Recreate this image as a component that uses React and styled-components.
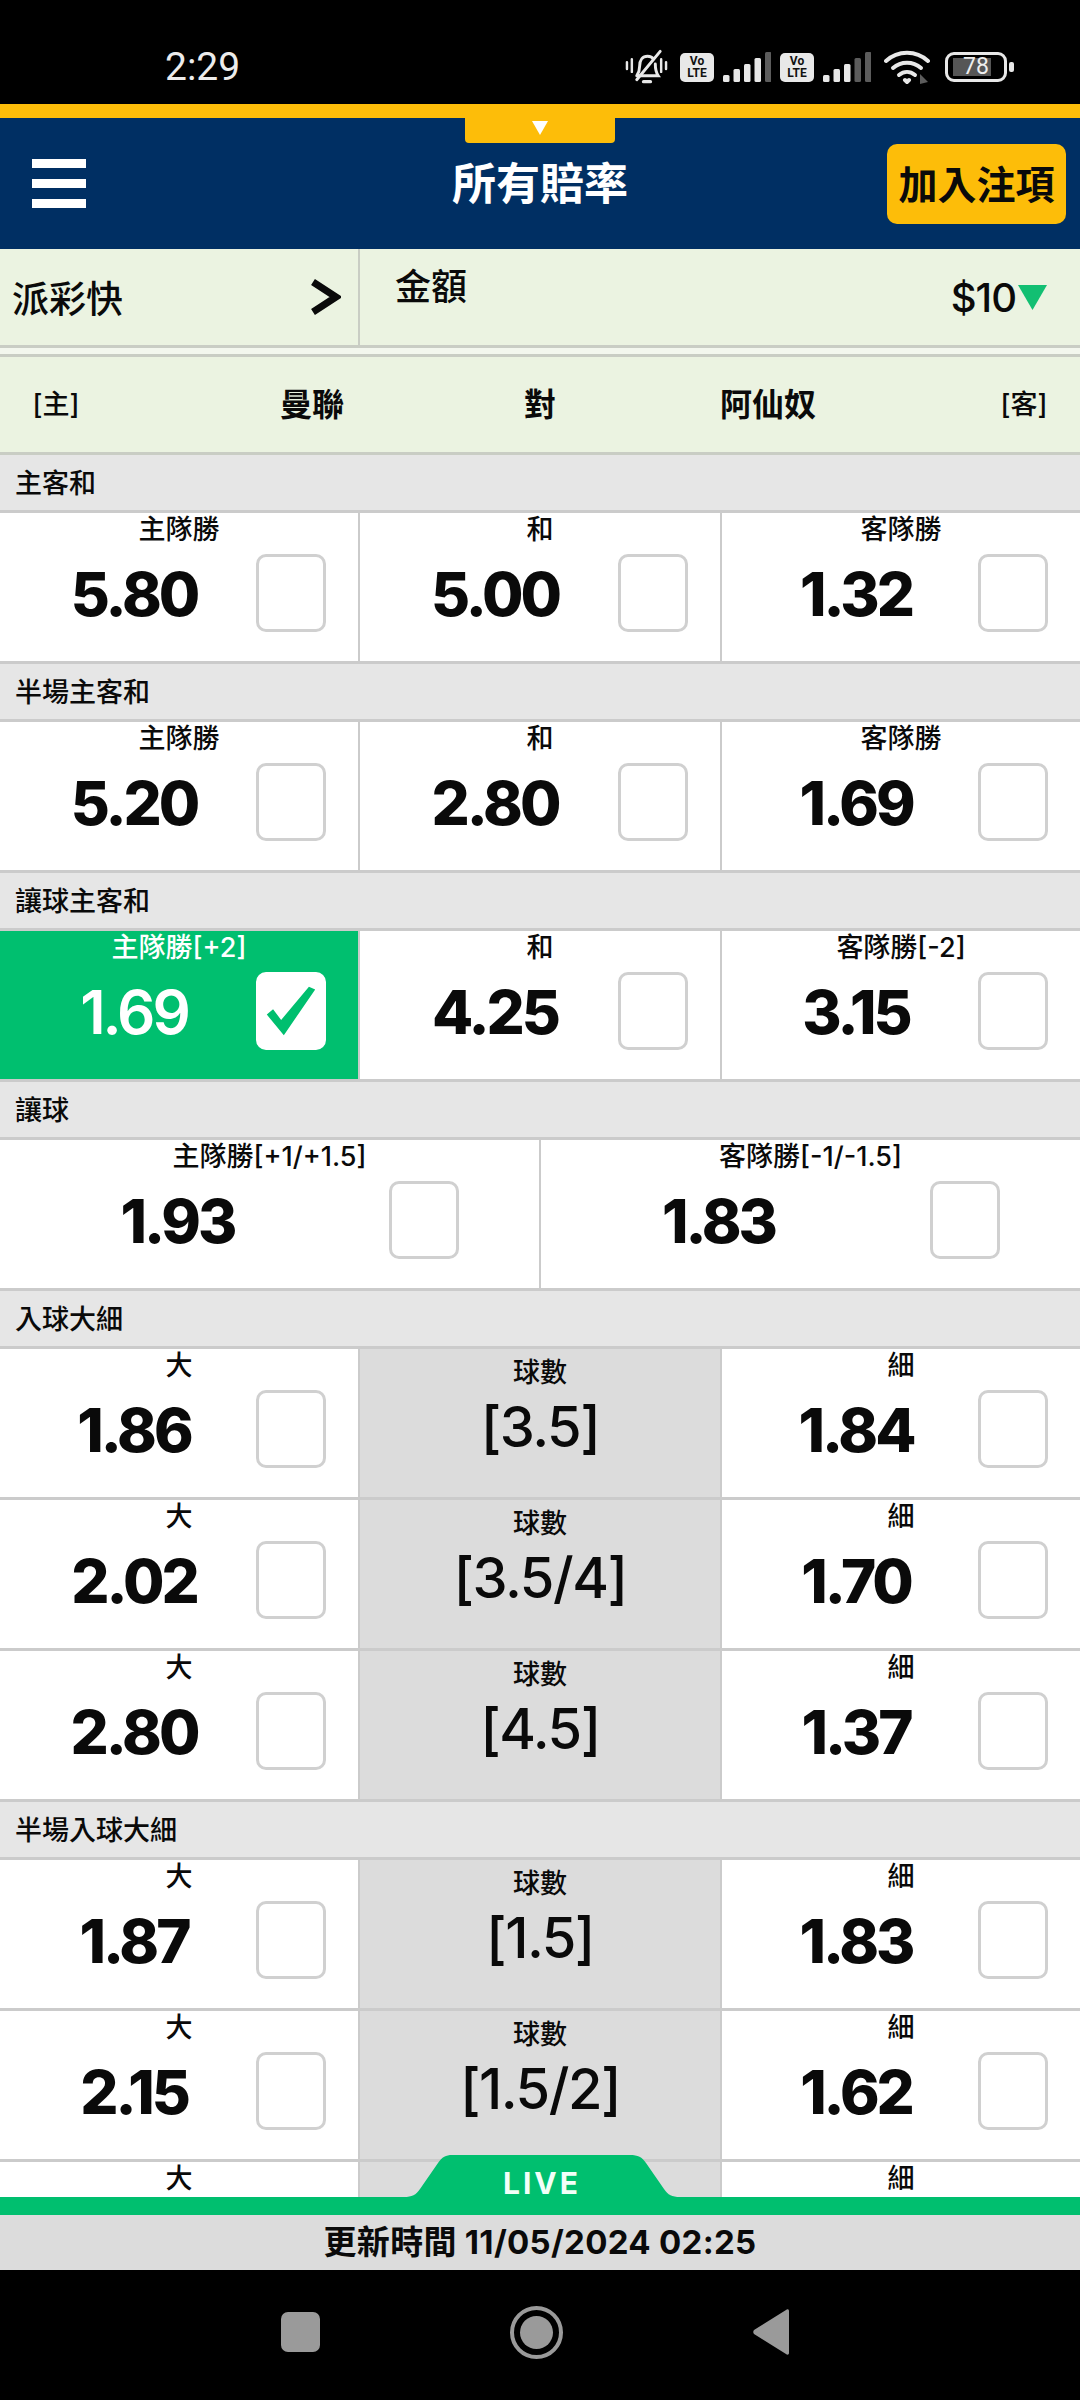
import React from 'react';
import styled, { createGlobalStyle } from 'styled-components';

const GlobalStyle = createGlobalStyle`
  html, body { margin: 0; padding: 0; background: #000; }
  * { box-sizing: border-box; }
  body { font-family: Inter, "Noto Sans CJK TC", sans-serif; color: #0a0a0a; }
`;

const Page = styled.div`
  width: 1080px;
  height: 2400px;
  display: flex;
  flex-direction: column;
  overflow: hidden;
`;

/* status bar */
const StatusBar = styled.div`
  height: 104px;
  flex: none;
  background: #000;
  display: flex;
  align-items: center;
  justify-content: space-between;
  padding: 44px 73px 14px 165px;
`;
const Clock = styled.div`
  color: #ececec;
  font-family: Roboto, sans-serif;
  font-size: 39px;
  line-height: 44px;
`;
const StatusIcons = styled.div`
  display: flex;
  align-items: center;
  gap: 9px;
`;
const VoLte = styled.div`
  width: 34px;
  height: 29px;
  border-radius: 5px;
  background: #e8e8e8;
  color: #111;
  font-family: Roboto, sans-serif;
  font-size: 12px;
  line-height: 12px;
  font-weight: 700;
  text-align: center;
  padding-top: 2px;
`;
const BellSlot = styled.div`
  display: flex;
  margin-right: 3px;
`;
const WifiSlot = styled.div`
  display: flex;
  margin-left: 4px;
`;
const Battery = styled.div`
  position: relative;
  width: 62px;
  height: 30px;
  margin-left: 6px;
  border: 3px solid #e8e8e8;
  border-radius: 9px;
  padding: 3px 5px;
  &::after {
    content: '';
    position: absolute;
    right: -10px;
    top: 7px;
    width: 5px;
    height: 10px;
    border-radius: 2px;
    background: #e8e8e8;
  }
`;
const BatteryFill = styled.div`
  height: 100%;
  width: 38px;
  background: #565656;
  color: #eee;
  font-family: Roboto, sans-serif;
  font-size: 23px;
  line-height: 18px;
  text-align: center;
  padding-left: 8px;
  white-space: nowrap;
`;

/* navy header */
const TopLine = styled.div`
  height: 14px;
  flex: none;
  background: #fdbd09;
`;
const Header = styled.header`
  position: relative;
  height: 131px;
  flex: none;
  background: #002f63;
  display: grid;
  grid-template-columns: 1fr auto 1fr;
  align-items: center;
  padding: 0 14px;
`;
const PullTab = styled.div`
  position: absolute;
  left: 465px;
  top: 0;
  width: 150px;
  height: 25px;
  background: #fdbd09;
  border-radius: 0 0 4px 4px;
  display: flex;
  justify-content: center;
  padding-top: 3px;
`;
const Burger = styled.div`
  width: 54px;
  margin-left: 18px;
  display: flex;
  flex-direction: column;
  gap: 11px;
`;
const BurgerLine = styled.span`
  height: 9px;
  background: #fff;
`;
const Title = styled.h1`
  margin: 0;
  color: #fff;
  font-size: 44px;
  line-height: 50px;
  font-weight: 700;
`;
const AddButton = styled.button`
  justify-self: end;
  width: 179px;
  height: 80px;
  border: 0;
  border-radius: 10px;
  background: #fdbd09;
  color: #0a0a0a;
  font-family: inherit;
  font-size: 39px;
  font-weight: 700;
  padding: 0 0 3px;
  white-space: nowrap;
`;

/* bet type and amount */
const QuickRow = styled.div`
  height: 99px;
  flex: none;
  display: grid;
  grid-template-columns: 360px 1fr;
  background: #ebf3e1;
  border-bottom: 3px solid #c9cdc4;
`;
const QuickType = styled.div`
  display: flex;
  align-items: center;
  justify-content: space-between;
  padding: 0 17px 0 12px;
  border-right: 2px solid #c9cdc4;
  font-size: 37px;
  font-weight: 500;
`;
const Amount = styled.div`
  display: flex;
  justify-content: space-between;
  padding: 17px 33px 0 35px;
`;
const AmountLabel = styled.div`
  font-size: 36px;
  line-height: 42px;
  font-weight: 500;
`;
const AmountValue = styled.div`
  display: flex;
  align-items: center;
  gap: 2px;
  height: 46px;
  margin-top: 8px;
  font-size: 40px;
  font-weight: 500;
  letter-spacing: -1px;
`;
const Gap = styled.div`
  height: 6px;
  flex: none;
  background: #f3f7ee;
`;

const Teams = styled.div`
  height: 101px;
  flex: none;
  display: grid;
  grid-template-columns: 112px 400px 56px 400px 112px;
  align-items: center;
  background: #ebf3e1;
  border-top: 3px solid #c9cdc4;
  border-bottom: 3px solid #c9cdc4;
  padding-bottom: 5px;
  text-align: center;
`;
const TeamText = styled.div`
  font-size: ${({ $small }) => ($small ? '27px' : '32px')};
  font-weight: ${({ $small }) => ($small ? 500 : 700)};
`;

/* odds list */
const List = styled.main`
  flex: 1;
  min-height: 0;
  overflow: hidden;
  background: #fff;
`;
const SectionTitle = styled.div`
  height: 58px;
  background: #e6e6e6;
  border-bottom: 3px solid #cbcbcb;
  padding-left: 15px;
  font-size: 27px;
  font-weight: 500;
  line-height: 57px;
`;
const Row = styled.div`
  height: 151px;
  display: grid;
  grid-template-columns: ${({ $cols }) => ($cols === 2 ? '541px 1fr' : '360px 362px 1fr')};
  border-bottom: 3px solid #cbcbcb;
`;
const Cell = styled.div`
  background: ${({ $on }) => ($on ? '#00bf6f' : '#fff')};
  color: ${({ $on }) => ($on ? '#fff' : '#0a0a0a')};
  border-right: 2px solid #cbcbcb;
  &:last-child { border-right: 0; }
`;
const Label = styled.div`
  height: 32px;
  line-height: 34px;
  text-align: center;
  font-size: 27px;
  font-weight: 500;
  white-space: nowrap;
`;
const CellBody = styled.div`
  display: flex;
  align-items: flex-start;
  margin-top: 9px;
  padding-right: ${({ $wide }) => ($wide ? '80px' : '32px')};
`;
const Odds = styled.div`
  flex: 1;
  text-align: center;
  font-size: 60px;
  line-height: 80px;
  font-weight: ${({ $on }) => ($on ? 600 : 800)};
  letter-spacing: -3px;
  padding: ${({ $wide }) => ($wide ? '0 34px 0 0' : '0 0 0 12px')};
`;
const Box = styled.div`
  width: 70px;
  height: 78px;
  flex: none;
  background: #fff;
  border: 3px solid #d0d0d0;
  border-radius: 10px;
  display: flex;
  align-items: center;
  justify-content: center;
  ${({ $on }) => $on && 'border-color: #fff;'}
`;
const LineCell = styled.div`
  background: #dcdcdc;
  border-right: 2px solid #cbcbcb;
  text-align: center;
  padding-top: 7px;
`;
const LineValue = styled.div`
  margin-top: 9px;
  font-size: 56px;
  line-height: 60px;
  font-weight: 500;
  letter-spacing: -1.5px;
`;

/* footer */
const Footer = styled.footer`
  position: relative;
  flex: none;
`;
const LiveTab = styled.div`
  position: absolute;
  left: 404px;
  bottom: 100%;
  width: 276px;
  height: 42px;
  display: flex;
`;
const LiveText = styled.span`
  position: absolute;
  left: 0;
  right: 0;
  bottom: -2px;
  text-align: center;
  color: #f2fff8;
  font-size: 30px;
  line-height: 32px;
  font-weight: 700;
  letter-spacing: 3px;
`;
const GreenBar = styled.div`
  height: 18px;
  background: #00bf6f;
`;
const UpdateBar = styled.div`
  height: 55px;
  background: #dcdcdc;
  text-align: center;
  font-size: 33px;
  line-height: 55px;
  font-weight: 700;
  letter-spacing: 0.3px;
`;
const NavBar = styled.nav`
  height: 130px;
  background: #000;
  display: flex;
  align-items: center;
  gap: 190px;
  padding: 0 0 6px 281px;
`;
const NavSquare = styled.div`
  width: 39px;
  height: 40px;
  border-radius: 7px;
  background: #9a9a9a;
`;

const BellIcon = () => (
  <svg width="43" height="36" viewBox="0 0 44 36" fill="none" stroke="#e8e8e8" strokeWidth="3" strokeLinecap="round">
    <path d="M12 27c2-3 3-5 3-10 0-6 3-10 8-10 3 0 5 1 6 3M31 15c0 6 1 9 3 12H14" />
    <path d="M12 31L36 2" />
    <path d="M2 13v7M7 10v13M37 10v13M42 13v7" strokeWidth="2.5" />
    <path d="M19 33h7" strokeWidth="3.5" />
  </svg>
);

const SignalIcon = ({ dim }) => (
  <svg width="48" height="30" viewBox="0 0 48 30">
    {[7, 13, 18, 24, 30].map((h, i) => (
      <rect
        key={i}
        x={i * 10.5}
        y={30 - h}
        width="6.5"
        height={h}
        rx="1.5"
        fill={i >= 5 - dim ? '#5c5c5c' : '#e8e8e8'}
      />
    ))}
  </svg>
);

const WifiIcon = () => (
  <svg width="46" height="34" viewBox="0 0 46 34" fill="none" stroke="#e8e8e8" strokeWidth="4" strokeLinecap="round">
    <path d="M2 11c12-11 30-11 42 0" />
    <path d="M9 18c8-7 20-7 28 0" />
    <path d="M15 25c5-4 11-4 16 0" />
    <path d="M21 30l2 2 2-2" strokeWidth="4" />
    <path d="M36 34V24l8 8z" fill="#5c5c5c" stroke="none" />
  </svg>
);

const Chevron = () => (
  <svg width="30" height="36" viewBox="0 0 30 36" fill="none" stroke="#0a0a0a" strokeWidth="7">
    <path d="M2 3l23 15L2 33" />
  </svg>
);

const AmountArrow = () => (
  <svg width="29" height="25" viewBox="0 0 29 25">
    <path d="M0 0h29L14.5 25z" fill="#12bf72" />
  </svg>
);

const PullArrow = () => (
  <svg width="16" height="14" viewBox="0 0 16 14">
    <path d="M0 0h16L8 14z" fill="#fff" />
  </svg>
);

const CheckMark = () => (
  <svg width="52" height="52" viewBox="0 0 58 58">
    <path d="M2 33l7-6 9 12L49 2l7 3-35 51z" fill="#00bf6f" />
  </svg>
);

const OddsCell = ({ label, odds, on, wide }) => (
  <Cell $on={on}>
    <Label>{label}</Label>
    <CellBody $wide={wide}>
      <Odds $on={on} $wide={wide}>{odds}</Odds>
      <Box $on={on}>{on && <CheckMark />}</Box>
    </CellBody>
  </Cell>
);

const GoalRow = ({ big, line, small }) => (
  <Row>
    <OddsCell label="大" odds={big} />
    <LineCell>
      {line && <Label>球數</Label>}
      <LineValue>{line}</LineValue>
    </LineCell>
    <OddsCell label="細" odds={small} />
  </Row>
);

const markets = [
  { title: '主客和', cells: [['主隊勝', '5.80'], ['和', '5.00'], ['客隊勝', '1.32']] },
  { title: '半場主客和', cells: [['主隊勝', '5.20'], ['和', '2.80'], ['客隊勝', '1.69']] },
  { title: '讓球主客和', cells: [['主隊勝[+2]', '1.69', true], ['和', '4.25'], ['客隊勝[-2]', '3.15']] },
];

const goals = [
  {
    title: '入球大細',
    rows: [['1.86', '[3.5]', '1.84'], ['2.02', '[3.5/4]', '1.70'], ['2.80', '[4.5]', '1.37']],
  },
  {
    title: '半場入球大細',
    rows: [['1.87', '[1.5]', '1.83'], ['2.15', '[1.5/2]', '1.62'], ['', '', '']],
  },
];

export default function App() {
  return (
    <Page>
      <GlobalStyle />
      <StatusBar>
        <Clock>2:29</Clock>
        <StatusIcons>
          <BellSlot><BellIcon /></BellSlot>
          <VoLte>Vo<br />LTE</VoLte>
          <SignalIcon dim={1} />
          <VoLte>Vo<br />LTE</VoLte>
          <SignalIcon dim={2} />
          <WifiSlot><WifiIcon /></WifiSlot>
          <Battery><BatteryFill>78</BatteryFill></Battery>
        </StatusIcons>
      </StatusBar>
      <TopLine />
      <Header>
        <PullTab><PullArrow /></PullTab>
        <Burger>
          <BurgerLine />
          <BurgerLine />
          <BurgerLine />
        </Burger>
        <Title>所有賠率</Title>
        <AddButton>加入注項</AddButton>
      </Header>

      <QuickRow>
        <QuickType>派彩快<Chevron /></QuickType>
        <Amount>
          <AmountLabel>金額</AmountLabel>
          <AmountValue>$10<AmountArrow /></AmountValue>
        </Amount>
      </QuickRow>
      <Gap />
      <Teams>
        <TeamText $small>[主]</TeamText>
        <TeamText>曼聯</TeamText>
        <TeamText>對</TeamText>
        <TeamText>阿仙奴</TeamText>
        <TeamText $small>[客]</TeamText>
      </Teams>

      <List>
        {markets.map((m) => (
          <div key={m.title}>
            <SectionTitle>{m.title}</SectionTitle>
            <Row>
              {m.cells.map(([label, odds, on]) => (
                <OddsCell key={label} label={label} odds={odds} on={on} />
              ))}
            </Row>
          </div>
        ))}
        <SectionTitle>讓球</SectionTitle>
        <Row $cols={2}>
          <OddsCell wide label="主隊勝[+1/+1.5]" odds="1.93" />
          <OddsCell wide label="客隊勝[-1/-1.5]" odds="1.83" />
        </Row>
        {goals.map((g) => (
          <div key={g.title}>
            <SectionTitle>{g.title}</SectionTitle>
            {g.rows.map(([big, line, small], i) => (
              <GoalRow key={i} big={big} line={line} small={small} />
            ))}
          </div>
        ))}
      </List>

      <Footer>
        <LiveTab>
          <svg width="276" height="42" viewBox="0 0 276 42">
            <path d="M0 42c8 0 12-2 16-8L34 8C38 2 42 0 48 0h178c8 0 12 2 16 8l18 26c4 6 8 8 16 8z" fill="#00bf6f" />
          </svg>
          <LiveText>LIVE</LiveText>
        </LiveTab>
        <GreenBar />
        <UpdateBar>更新時間 11/05/2024 02:25</UpdateBar>
        <NavBar>
          <NavSquare />
          <svg width="53" height="53" viewBox="0 0 53 53">
            <circle cx="26.5" cy="26.5" r="24.5" fill="none" stroke="#9a9a9a" strokeWidth="4" />
            <circle cx="26.5" cy="26.5" r="16.5" fill="#9a9a9a" />
          </svg>
          <svg width="36" height="46" viewBox="0 0 36 46">
            <path d="M36 2v42c0 2-2 2-3 1L1 25c-1-1-1-3 0-4L33 1c1-1 3-1 3 1z" fill="#9a9a9a" />
          </svg>
        </NavBar>
      </Footer>
    </Page>
  );
}
